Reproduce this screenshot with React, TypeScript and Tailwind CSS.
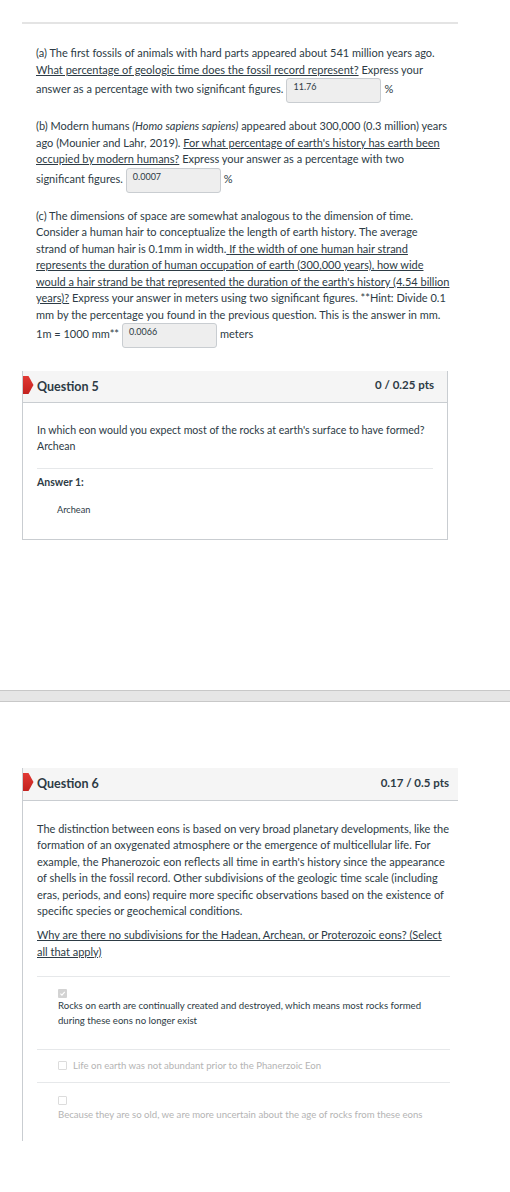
import React from "react";

const Answer = ({ value }: { value: string }) => (
  <span className="mx-[3px] inline-block h-[25px] w-[95px] rounded-[3px] border border-[#c9cdd1] bg-[#eeeeee] px-[6px] pt-[1px] align-middle text-[9px] leading-[14px] text-[#2d3b45]">
    {value}
  </span>
);

const Marker = () => (
  <svg
    className="absolute left-0 top-[5px]"
    width="11"
    height="18"
    viewBox="0 0 11 18"
  >
    <defs>
      <linearGradient id="mk" x1="0" y1="0" x2="0" y2="1">
        <stop offset="0" stopColor="#e23a35" />
        <stop offset="1" stopColor="#c2221f" />
      </linearGradient>
    </defs>
    <polygon points="0,0 5.5,0 10.5,9 5.5,18 0,18" fill="url(#mk)" />
  </svg>
);

const Check = ({ checked }: { checked?: boolean }) =>
  checked ? (
    <span className="flex h-[9px] w-[9px] items-center justify-center rounded-[1px] bg-[#d3d3d3]">
      <svg width="7" height="7" viewBox="0 0 10 10">
        <path d="M2 5.3 L4.2 7.4 L8.2 2.6" fill="none" stroke="#fff" strokeWidth="1.6" />
      </svg>
    </span>
  ) : (
    <span className="block h-[9px] w-[9px] shrink-0 rounded-[1px] border border-[#dcdcdc] bg-white" />
  );

export default function App() {
  return (
    <div className="min-h-[1192px] w-[510px] bg-white pt-[22px] text-[#2d3b45] [font-family:Lato,sans-serif]">
      <div className="mx-[22px] h-[2px] w-[436px] bg-[#e4e4e4]" />

      <div className="ml-[36px] w-[414px] text-[11px] leading-[16.5px]">
        <p className="mt-[21px]">
          (a) The first fossils of animals with hard parts appeared about 541 million years ago.{" "}
          <span className="underline">What percentage of geologic time does the fossil record represent?</span>{" "}
          Express your answer as a percentage with two significant figures.
          <Answer value="11.76" />%
        </p>

        <p className="mt-[15px]">
          (b) Modern humans <i>(Homo sapiens sapiens)</i> appeared about 300,000 (0.3 million) years ago
          (Mounier and Lahr, 2019).{" "}
          <span className="underline">
            For what percentage of earth's history has earth been occupied by modern humans?
          </span>{" "}
          Express your answer as a percentage with two significant figures.
          <Answer value="0.0007" />%
        </p>

        <p className="mt-[15px]">
          (c) The dimensions of space are somewhat analogous to the dimension of time. Consider a human
          hair to conceptualize the length of earth history. The average strand of human hair is 0.1mm
          in width.
          <span className="underline">
            {" "}
            If the width of one human hair strand represents the duration of human occupation of earth
            (300,000 years), how wide would a hair strand be that represented the duration of the
            earth's history (4.54 billion years)?
          </span>{" "}
          Express your answer in meters using two significant figures. **Hint: Divide 0.1 mm by the
          percentage you found in the previous question. This is the answer in mm. 1m = 1000 mm**
          <Answer value="0.0066" />
          meters
        </p>
      </div>

      {/* Question 5 */}
      <div className="ml-[22px] mt-[23px] w-[426px] border-x border-b border-[#c9cdd1]">
        <div className="relative flex h-[32px] items-center justify-between border-b border-[#c9cdd1] bg-[#f5f5f5] pl-[14px] pr-[13px]">
          <Marker />
          <span className="pt-[1px] text-[12.5px] font-bold">Question 5</span>
          <span className="pb-[3px] text-[11.5px] font-bold">0 / 0.25 pts</span>
        </div>
        <div className="px-[14px] pb-[22px] pt-[20px]">
          <div className="text-[10.6px] leading-[15.5px]">
            <p>In which eon would you expect most of the rocks at earth's surface to have formed?</p>
            <p>Archean</p>
          </div>
          <div className="mt-[14px] h-px bg-[#e6e8ea]" />
          <p className="mt-[5px] text-[10.5px] font-bold leading-[16px]">Answer 1:</p>
          <p className="ml-[20px] mt-[13px] text-[9.2px] leading-[14px]">Archean</p>
        </div>
      </div>

      <div className="mt-[150px] h-[12px] border-y border-[#c8c8c8] bg-[#e6e6e6]" />

      {/* Question 6 */}
      <div className="ml-[22px] mt-[66px] w-[436px] border-l border-[#c9cdd1] pb-[19px]">
        <div className="relative flex h-[33px] items-center justify-between border-b border-[#c9cdd1] bg-[#f5f5f5] pl-[14px] pr-[9px]">
          <Marker />
          <span className="pt-[1px] text-[12.5px] font-bold">Question 6</span>
          <span className="pb-[3px] text-[11.5px] font-bold">0.17 / 0.5 pts</span>
        </div>
        <div className="pl-[14px] pr-[8px] pt-[20px]">
          <div className="w-[414px] text-[11px] leading-[16.4px]">
            <p>
              The distinction between eons is based on very broad planetary developments, like the
              formation of an oxygenated atmosphere or the emergence of multicellular life. For
              example, the Phanerozoic eon reflects all time in earth's history since the appearance
              of shells in the fossil record. Other subdivisions of the geologic time scale (including
              eras, periods, and eons) require more specific observations based on the existence of
              specific species or geochemical conditions.
            </p>
            <p className="mt-[8px] underline">
              Why are there no subdivisions for the Hadean, Archean, or Proterozoic eons? (Select all
              that apply)
            </p>
          </div>

          <div className="mt-[16px] border-t border-[#e6e8ea] pb-[21px] pl-[21px] pr-[9px] pt-[12px] text-[9.6px] leading-[14.3px]">
            <Check checked />
            <p className="mt-[1px]">
              Rocks on earth are continually created and destroyed, which means most rocks formed
              during these eons no longer exist
            </p>
          </div>

          <div className="flex items-center gap-[6px] border-t border-[#e6e8ea] pb-[9px] pl-[21px] pt-[9px] text-[9.6px] leading-[14.3px] text-[#b4b4b4]">
            <Check />
            <span>Life on earth was not abundant prior to the Phanerzoic Eon</span>
          </div>

          <div className="border-t border-[#e6e8ea] pl-[21px] pr-[9px] pt-[13px] text-[9.6px] leading-[14.3px] text-[#b4b4b4]">
            <Check />
            <p className="mt-[3px]">
              Because they are so old, we are more uncertain about the age of rocks from these eons
            </p>
          </div>
        </div>
      </div>
    </div>
  );
}
